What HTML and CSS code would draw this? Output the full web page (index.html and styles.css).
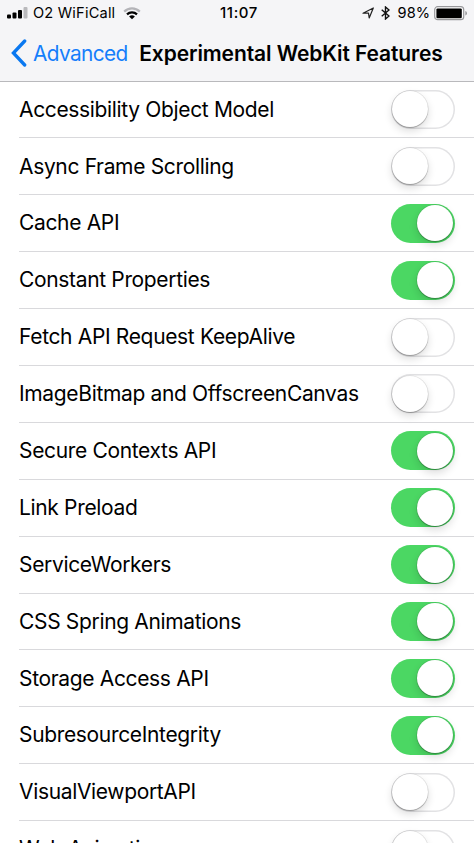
FILE: index.html
```html
<!DOCTYPE html>
<html lang="en">
<head>
<meta charset="utf-8">
<title>Experimental WebKit Features</title>
<link rel="stylesheet" href="styles.css">
</head>
<body>
<header class="top">
  <div class="status">
    <div class="status-left">
      <svg class="signal" width="21" height="12" viewBox="0 0 21 12"><rect x="0" y="7.5" width="4" height="4" rx="1"/><rect x="5.5" y="5.5" width="4" height="6" rx="1"/><rect x="11" y="3" width="4" height="8.5" rx="1"/><rect x="16.5" y="0" width="4" height="11.5" rx="1" fill="#b9b9bc"/></svg>
      <span class="carrier">O2 WiFiCall</span>
      <svg class="wifi" width="18" height="13" viewBox="0 0 18 13" fill="none"><path d="M1.2 4.6C5.5.3 12.5.3 16.8 4.6" stroke="#b4b4b8" stroke-width="2.2"/><path d="M4 7.4C6.8 4.7 11.2 4.7 14 7.4" stroke="#000" stroke-width="2.2"/><path d="M9 12.3 6.1 9.4Q9 7.2 11.9 9.4Z" fill="#000"/></svg>
    </div>
    <time class="clock">11:07</time>
    <div class="status-right">
      <svg class="location" width="13" height="12" viewBox="0 0 13 12" fill="none" stroke="#222" stroke-width="1.2" stroke-linejoin="round"><path d="M1 6.2 11.3 1 7.2 11 6.5 6.2Z"/></svg>
      <svg class="bluetooth" width="9" height="14" viewBox="0 0 9 14" fill="none" stroke="#111" stroke-width="1.4"><path d="M.7 3.8 8 10 4.5 13V1L8 4 .7 10.2"/></svg>
      <span class="percent">98%</span>
      <svg class="battery" width="34" height="15" viewBox="0 0 34 15"><rect x=".7" y=".7" width="29" height="13" rx="3" fill="#fff" stroke="#98989b" stroke-width="1.2"/><rect x="2.4" y="2.4" width="25.4" height="9.8" rx="1.2"/><path d="M31.3 5v4.6q1.7-.6 1.7-2.3T31.3 5Z" fill="#98989b"/></svg>
    </div>
  </div>
  <nav class="nav">
    <svg class="chevron" width="16" height="28" viewBox="0 0 16 28" fill="none"><path d="M13.7 2 2.4 14 13.7 26" stroke="#0a78f0" stroke-width="3.3" stroke-linecap="round" stroke-linejoin="miter"/></svg>
    <span class="back">Advanced</span>
    <h1 class="title">Experimental WebKit Features</h1>
  </nav>
</header>
<main class="list">
  <div class="row"><span>Accessibility Object Model</span><i class="switch"></i></div>
  <div class="row"><span>Async Frame Scrolling</span><i class="switch"></i></div>
  <div class="row"><span>Cache API</span><i class="switch on"></i></div>
  <div class="row"><span>Constant Properties</span><i class="switch on"></i></div>
  <div class="row"><span>Fetch API Request KeepAlive</span><i class="switch"></i></div>
  <div class="row"><span>ImageBitmap and OffscreenCanvas</span><i class="switch"></i></div>
  <div class="row"><span>Secure Contexts API</span><i class="switch on"></i></div>
  <div class="row"><span>Link Preload</span><i class="switch on"></i></div>
  <div class="row"><span>ServiceWorkers</span><i class="switch on"></i></div>
  <div class="row"><span>CSS Spring Animations</span><i class="switch on"></i></div>
  <div class="row"><span>Storage Access API</span><i class="switch on"></i></div>
  <div class="row"><span>SubresourceIntegrity</span><i class="switch on"></i></div>
  <div class="row"><span>VisualViewportAPI</span><i class="switch"></i></div>
  <div class="row"><span>Web Animations</span><i class="switch"></i></div>
</main>
</body>
</html>
```
FILE: styles.css
```css
* { box-sizing: border-box; }
html, body { margin: 0; height: 843px; overflow: hidden; }
body {
  width: 474px;
  display: flex;
  flex-direction: column;
  background: #fff;
  color: #000;
  font-family: Inter, "Liberation Sans", sans-serif;
}
svg { display: block; flex: none; }
.top {
  flex: none;
  height: 81.5px;
  background: #f5f5f7;
  border-bottom: 1px solid #b9b9bc;
}
.status {
  height: 26px;
  display: grid;
  grid-template-columns: 1fr auto 1fr;
  align-items: center;
  padding: 0 7px;
  font-size: 14.6px;
  line-height: 26px;
  white-space: nowrap;
}
.status-left, .status-right { display: flex; align-items: center; }
.status-right { justify-content: flex-end; padding-right: 8px; }
.carrier { margin-left: 5px; letter-spacing: .2px; }
.wifi { margin-left: 8px; }
.clock { font-weight: 500; font-size: 15px; letter-spacing: .6px; margin-left: 4px; }
.bluetooth { margin-left: 6px; }
.percent { margin: 0 4px 0 8px; }
.battery { margin-right: -9px; }
.nav {
  height: 54px;
  display: flex;
  align-items: center;
  padding-left: 11px;
  white-space: nowrap;
}
.back { margin-left: 6px; color: #157efb; font-size: 20.8px; letter-spacing: -.6px; }
.title { margin: 0 0 0 11.5px; font-size: 21px; font-weight: 600; letter-spacing: -.1px; }
.list { flex: none; padding-left: 19px; }
.row {
  height: 56.9px;
  display: flex;
  align-items: center;
  justify-content: space-between;
  padding-right: 19px;
  border-bottom: 1px solid #d9d9dc;
  font-size: 21px;
  letter-spacing: -.34px;
  line-height: 28px;
  white-space: nowrap;
}
.row span { padding-top: .4px; }
.switch {
  width: 64.5px;
  height: 39px;
  flex: none;
  display: flex;
  padding: 1.5px 2px 1.5px 1.5px;
  border-radius: 20px;
  background: #fff;
  box-shadow: inset 0 0 0 1.5px #e2e2e4;
}
.switch::before {
  content: "";
  width: 36px;
  height: 36px;
  border-radius: 50%;
  background: #fff;
  box-shadow: 0 0 0 .6px rgba(0,0,0,.1), 0 1px 1px rgba(0,0,0,.25), 0 4px 8px rgba(0,0,0,.14);
}
.on { background: #4bd763; box-shadow: none; justify-content: flex-end; }
```
